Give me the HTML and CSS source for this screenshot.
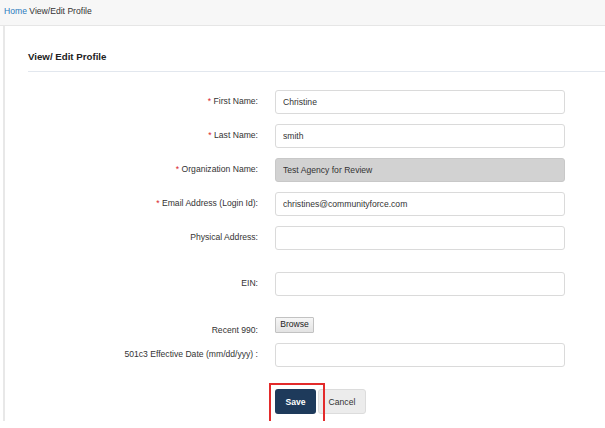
FILE: index.html
```html
<!DOCTYPE html>
<html>
<head>
<meta charset="utf-8">
<link rel="stylesheet" href="styles.css">
</head>
<body>
<div class="crumbs"><a href="#">Home</a> View/Edit Profile</div>
<div class="panel">
  <h1 class="panel-title">View/ Edit Profile</h1>
  <form class="form">
    <div class="row"><label class="label"><span class="req">*</span> First Name:</label><input class="field" type="text" value="Christine"></div>
    <div class="row"><label class="label"><span class="req">*</span> Last Name:</label><input class="field" type="text" value="smith"></div>
    <div class="row"><label class="label"><span class="req">*</span> Organization Name:</label><input class="field disabled" type="text" value="Test Agency for Review" readonly></div>
    <div class="row"><label class="label"><span class="req">*</span> Email Address (Login Id):</label><input class="field" type="text" value="christines@communityforce.com"></div>
    <div class="row row-wide"><label class="label">Physical Address:</label><input class="field" type="text" value=""></div>
    <div class="row row-wide2"><label class="label">EIN:</label><input class="field" type="text" value=""></div>
    <div class="row"><label class="label label-low">Recent 990:</label><span class="browse">Browse</span></div>
    <div class="row row-wide"><label class="label">501c3 Effective Date (mm/dd/yyy) :</label><input class="field" type="text" value=""></div>
    <div class="actions">
      <span class="save-wrap"><span class="btn btn-save">Save</span><span class="highlight"></span></span>
      <span class="btn btn-cancel">Cancel</span>
    </div>
  </form>
</div>
</body>
</html>
```
FILE: styles.css
```css
html, body {
  margin: 0;
  padding: 0;
  background: #fff;
}
body {
  font-family: "Liberation Sans", Arial, Helvetica, sans-serif;
  font-size: 8.6px;
  color: #333;
}
.crumbs {
  height: 26px;
  box-sizing: border-box;
  background: #f7f7f7;
  border-bottom: 1px solid #e6e6e6;
  padding-left: 4px;
  line-height: 22px;
  color: #333;
}
.crumbs a {
  color: #2b7bbd;
  text-decoration: none;
}
.panel {
  margin-left: 3px;
  border-left: 2px solid #e8e8e8;
  height: 395px;
  background: #fff;
}
.panel-title {
  margin: 0 0 0 23px;
  padding-top: 24px;
  padding-bottom: 7px;
  line-height: 14px;
  font-size: 9.7px;
  font-weight: bold;
  color: #222;
  border-bottom: 1px solid #e2e7ee;
}
.form {
  margin: 0;
  padding-top: 18px;
}
.row {
  display: flex;
  align-items: center;
  margin-bottom: 10px;
}
.row-wide {
  margin-bottom: 22px;
}
.row-wide2 {
  margin-bottom: 21px;
}
.label {
  width: 253px;
  text-align: right;
  line-height: 12px;
  color: #333;
  margin-top: -2px;
}
.label-low {
  margin-top: 5px;
  margin-bottom: -5px;
}
.req {
  color: #d9262c;
}
.field {
  margin: 0 0 0 17px;
  width: 290px;
  height: 24px;
  box-sizing: border-box;
  border: 1px solid #dadada;
  border-radius: 3px;
  padding: 0 7px;
  font-family: inherit;
  font-size: 8.6px;
  color: #333;
  background: #fff;
  outline: none;
}
.field.disabled {
  background: #d2d2d2;
  border-color: #c8c8c8;
}
.browse {
  margin-left: 17px;
  width: 39px;
  height: 16px;
  box-sizing: border-box;
  border: 1px solid #c2c2c2;
  background: linear-gradient(#f6f6f6, #e3e3e3);
  border-radius: 1px;
  font-size: 8.6px;
  line-height: 13px;
  text-align: center;
  color: #222;
}
.actions {
  display: flex;
  margin-left: 270px;
  gap: 2px;
}
.save-wrap {
  position: relative;
  display: flex;
}
.btn {
  height: 25px;
  box-sizing: border-box;
  border-radius: 3px;
  display: flex;
  align-items: center;
  justify-content: center;
  font-size: 8.6px;
}
.btn-save {
  width: 41px;
  background: #1e3a5b;
  color: #fff;
  font-weight: bold;
}
.btn-cancel {
  width: 48px;
  background: #ececec;
  border: 1px solid #dcdcdc;
  color: #333;
}
.highlight {
  position: absolute;
  left: -6px;
  top: -6px;
  width: 56px;
  height: 42px;
  box-sizing: border-box;
  border: 2px solid #e32b2b;
}
```
